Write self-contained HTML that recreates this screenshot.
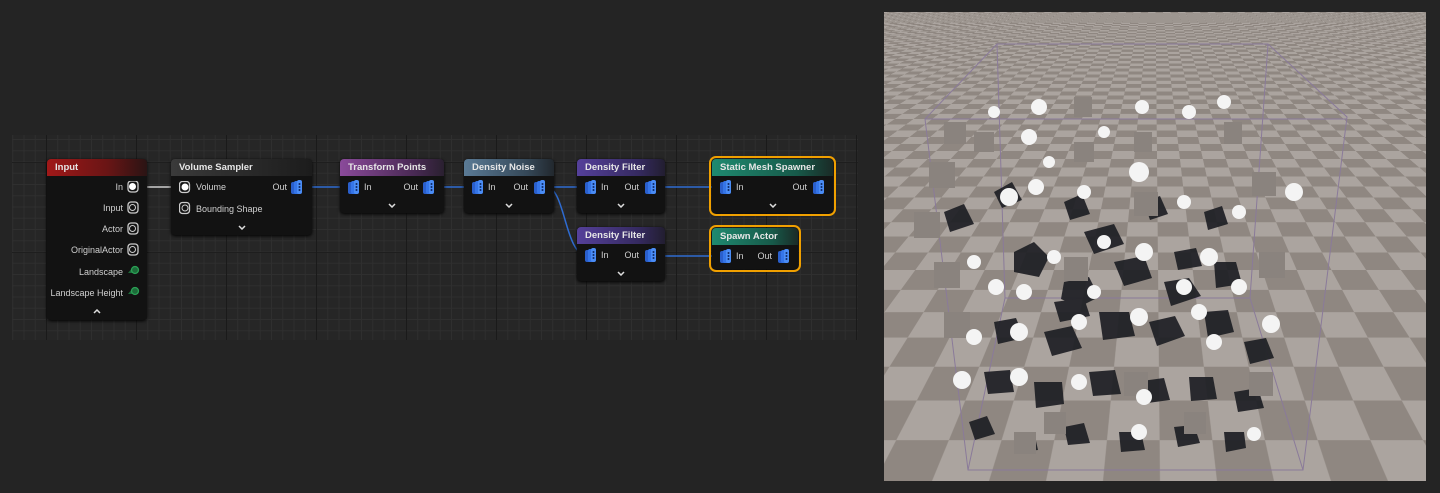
<!DOCTYPE html>
<html><head><meta charset="utf-8"><style>
*{margin:0;padding:0;box-sizing:border-box}
body{width:1440px;height:493px;background:#242424;position:relative;overflow:hidden;font-family:"Liberation Sans",sans-serif}
#graph{position:absolute;left:12px;top:135px;width:846px;height:205px;background-color:#262626;
background-image:linear-gradient(90deg,#1a1a1a 1px,transparent 1px),linear-gradient(0deg,#1e1e1e 1px,transparent 1px),linear-gradient(90deg,#2f2f2f 1px,transparent 1px),linear-gradient(0deg,#2f2f2f 1px,transparent 1px);
background-size:90px 90px,90px 90px,11.25px 11.25px,11.25px 11.25px;background-position:34px 0,0 28px,34px 0,0 5px}
.node{position:absolute;background:#121212;border-radius:4px;box-shadow:0 1px 3px #000;color:#d0d0d0;font-size:9px}
.hd{height:17px;border-radius:4px 4px 0 0;padding:3px 0 0 8px;font-weight:bold;color:#e6e6e6;font-size:9.5px}
.sel{outline:2px solid #f0a000;outline-offset:1px;border-radius:4px}
.row{position:absolute;height:14px;line-height:14px;white-space:nowrap}
.chev{position:absolute;left:50%;margin-left:-4px;width:8px;height:5px}
.pin{position:absolute;width:12px;height:14px}
</style></head><body>
<div id="graph"></div>
<svg style="position:absolute;left:0;top:0" width="880" height="493">
<path d="M140 187H176" stroke="#cfcfcf" stroke-width="1.5"/>
<path d="M304 187H352M436 187H476M546 187H590M656 187H722M546 187C566 187 564 256 588 256M656 256H722" stroke="#2e6bd0" stroke-width="1.5" fill="none"/>
</svg>
<svg width="0" height="0" style="position:absolute"><defs>
<g id="pn"><rect x="0" y="2" width="6" height="12" rx="2" fill="#2a5fcc"/><rect x="3" y="1" width="6" height="13" rx="2" fill="#3575e8"/><rect x="6" y="0" width="5" height="14" rx="2" fill="#4a8cf5"/><circle cx="8.5" cy="4" r="1" fill="#0d2a66"/><circle cx="8.5" cy="7" r="1" fill="#0d2a66"/><circle cx="8.5" cy="10" r="1" fill="#0d2a66"/></g>
<path id="cd" d="M1 1L4 4L7 1" stroke="#ddd" stroke-width="1.5" fill="none"/>
</defs></svg>

<div class="node" style="left:47px;top:159px;width:100px;height:161px">
<div class="hd" style="background:linear-gradient(90deg,#a01818,#6a1515 60%,#2a1414)">Input</div>
<div class="row" style="right:24px;top:21px">In</div>
<div class="row" style="right:24px;top:42px">Input</div>
<div class="row" style="right:24px;top:63px">Actor</div>
<div class="row" style="right:24px;top:84px">OriginalActor</div>
<div class="row" style="right:24px;top:106px">Landscape</div>
<div class="row" style="right:24px;top:127px">Landscape Height</div>
<svg style="position:absolute;left:80px;top:22px" width="14" height="120">
<rect x="1" y="0" width="10" height="11" rx="3" fill="none" stroke="#ccc" stroke-width="1.3"/><circle cx="5.5" cy="5.5" r="3.5" fill="#fff"/>
<rect x="1" y="21" width="10" height="11" rx="3" fill="none" stroke="#ccc" stroke-width="1.3"/><circle cx="5.5" cy="26.5" r="3" fill="none" stroke="#ccc"/>
<rect x="1" y="42" width="10" height="11" rx="3" fill="none" stroke="#ccc" stroke-width="1.3"/><circle cx="5.5" cy="47.5" r="3" fill="none" stroke="#ccc"/>
<rect x="1" y="63" width="10" height="11" rx="3" fill="none" stroke="#ccc" stroke-width="1.3"/><circle cx="5.5" cy="68.5" r="3" fill="none" stroke="#ccc"/>
<path d="M1 92L6 86H11V92Z" fill="#1d6b3a"/><circle cx="8" cy="89" r="3.5" fill="none" stroke="#2aa055" stroke-width="1.3"/>
<path d="M1 113L6 107H11V113Z" fill="#1d6b3a"/><circle cx="8" cy="110" r="3.5" fill="none" stroke="#2aa055" stroke-width="1.3"/>
</svg>
<svg class="chev" style="top:150px"><path d="M1 4L4 1L7 4" stroke="#ddd" stroke-width="1.5" fill="none"/></svg>
</div>

<div class="node" style="left:171px;top:159px;width:141px;height:76px">
<div class="hd" style="background:linear-gradient(90deg,#3a3a3a,#1c1c1c)">Volume Sampler</div>
<svg style="position:absolute;left:8px;top:22px" width="12" height="40">
<rect x="0.5" y="0.5" width="10" height="11" rx="3" fill="none" stroke="#ccc" stroke-width="1.3"/><circle cx="6" cy="6" r="3.5" fill="#fff"/>
<rect x="0.5" y="21.5" width="10" height="11" rx="3" fill="none" stroke="#ccc" stroke-width="1.3"/><circle cx="6" cy="27" r="3" fill="none" stroke="#ccc"/>
</svg>
<div class="row" style="left:25px;top:21px">Volume</div>
<div class="row" style="left:25px;top:43px">Bounding Shape</div>
<div class="row" style="right:25px;top:21px">Out</div>
<svg class="pin" style="left:120px;top:21px"><use href="#pn"/></svg>
<svg class="chev" style="top:66px"><use href="#cd"/></svg>
</div>

<div class="node" style="left:340px;top:159px;width:104px;height:54px">
<div class="hd" style="background:linear-gradient(90deg,#8a4a9a,#4a2a55 70%,#2a2030)">Transform Points</div>
<svg class="pin" style="left:8px;top:21px"><use href="#pn"/></svg><div class="row" style="left:24px;top:21px">In</div>
<div class="row" style="right:26px;top:21px">Out</div><svg class="pin" style="left:83px;top:21px"><use href="#pn"/></svg>
<svg class="chev" style="top:44px"><use href="#cd"/></svg></div>

<div class="node" style="left:464px;top:159px;width:90px;height:54px">
<div class="hd" style="background:linear-gradient(90deg,#5a7a95,#354858 70%,#22282e)">Density Noise</div>
<svg class="pin" style="left:8px;top:21px"><use href="#pn"/></svg><div class="row" style="left:24px;top:21px">In</div>
<div class="row" style="right:26px;top:21px">Out</div><svg class="pin" style="left:70px;top:21px"><use href="#pn"/></svg>
<svg class="chev" style="top:44px"><use href="#cd"/></svg></div>

<div class="node" style="left:577px;top:159px;width:88px;height:54px">
<div class="hd" style="background:linear-gradient(90deg,#55409a,#352a60 70%,#221e30)">Density Filter</div>
<svg class="pin" style="left:8px;top:21px"><use href="#pn"/></svg><div class="row" style="left:24px;top:21px">In</div>
<div class="row" style="right:26px;top:21px">Out</div><svg class="pin" style="left:68px;top:21px"><use href="#pn"/></svg>
<svg class="chev" style="top:44px"><use href="#cd"/></svg></div>

<div class="node" style="left:577px;top:227px;width:88px;height:54px">
<div class="hd" style="background:linear-gradient(90deg,#55409a,#352a60 70%,#221e30)">Density Filter</div>
<svg class="pin" style="left:8px;top:21px"><use href="#pn"/></svg><div class="row" style="left:24px;top:21px">In</div>
<div class="row" style="right:26px;top:21px">Out</div><svg class="pin" style="left:68px;top:21px"><use href="#pn"/></svg>
<svg class="chev" style="top:44px"><use href="#cd"/></svg></div>

<div class="node sel" style="left:712px;top:159px;width:121px;height:54px">
<div class="hd" style="background:linear-gradient(90deg,#1f8a70,#175a4a 70%,#1a2a26)">Static Mesh Spawner</div>
<svg class="pin" style="left:8px;top:21px"><use href="#pn"/></svg><div class="row" style="left:24px;top:21px">In</div>
<div class="row" style="right:26px;top:21px">Out</div><svg class="pin" style="left:101px;top:21px"><use href="#pn"/></svg>
<svg class="chev" style="top:44px"><use href="#cd"/></svg></div>

<div class="node sel" style="left:712px;top:228px;width:86px;height:41px">
<div class="hd" style="background:linear-gradient(90deg,#1f8a70,#175a4a 70%,#1a2a26)">Spawn Actor</div>
<svg class="pin" style="left:8px;top:21px"><use href="#pn"/></svg><div class="row" style="left:24px;top:21px">In</div>
<div class="row" style="right:26px;top:21px">Out</div><svg class="pin" style="left:66px;top:21px"><use href="#pn"/></svg>
</div>

<div style="position:absolute;left:884px;top:12px;width:542px;height:469px;overflow:hidden;background:#9a938e;perspective:600px;perspective-origin:50% 36px">
<div style="position:absolute;left:-3729px;width:8000px;top:-19531px;height:20000px;transform-origin:50% 100%;transform:rotateX(80deg);
background:repeating-conic-gradient(#8f8781 0 25%,#aba49f 0 50%) 15px 0/114px 114px"></div>
<svg style="position:absolute;left:0;top:0" width="542" height="469">
<g stroke="#8a7a9a" stroke-width="1" fill="none">
<path d="M113 32L41 107L84 458H419L463 105L384 32ZM41 107H463M113 32L121 286H366L384 32M84 458L121 286M419 458L366 286"/>
</g>
<g fill="#1e1f24" opacity=".92">
<path d="M130 240l20-10 15 15-10 20-25-5z"/><path d="M180 270l25-5 10 20-20 10-18-8z"/><path d="M230 250l30-6 8 22-28 8z"/><path d="M280 270l25-4 12 18-30 10z"/><path d="M330 250l22 0 6 22-26 4z"/><path d="M110 310l22-4 8 20-26 6z"/><path d="M160 320l28-6 10 22-30 8z"/><path d="M215 300l30 0 6 24-32 4z"/><path d="M265 310l26-6 10 20-28 10z"/><path d="M320 300l24-2 6 22-26 6z"/><path d="M360 330l22-4 8 20-24 6z"/><path d="M100 360l26-2 4 22-26 2z"/><path d="M150 370l28 0 2 22-28 4z"/><path d="M205 360l26-2 6 24-28 2z"/><path d="M250 370l30-4 6 22-30 4z"/><path d="M305 365l24 0 4 22-26 2z"/><path d="M350 380l24-4 6 20-26 4z"/><path d="M85 410l18-6 8 18-20 6z"/><path d="M130 420l20 0 4 18-22 2z"/><path d="M180 415l20-4 6 20-22 2z"/><path d="M235 420l22 0 4 18-24 2z"/><path d="M290 415l20-2 6 18-22 4z"/><path d="M340 420l20 0 2 16-20 4z"/><path d="M60 200l20-8 10 20-24 8z"/><path d="M110 180l18-10 10 18-20 8z"/><path d="M180 190l18-8 8 20-20 6z"/><path d="M260 190l16-6 8 18-18 6z"/><path d="M320 200l18-6 6 18-20 6z"/><path d="M200 220l30-8 10 20-30 10z"/><path d="M170 290l30-4 6 18-30 6z"/><path d="M290 240l22-4 6 18-24 4z"/>
</g>
<g fill="#8a837e">
<rect x="60" y="110" width="22" height="22"/><rect x="45" y="150" width="26" height="26"/><rect x="30" y="200" width="26" height="26"/><rect x="50" y="250" width="26" height="26"/><rect x="90" y="120" width="20" height="20"/><rect x="190" y="85" width="18" height="20"/><rect x="190" y="130" width="20" height="20"/><rect x="250" y="120" width="18" height="20"/><rect x="250" y="180" width="24" height="24"/><rect x="368" y="160" width="24" height="24"/><rect x="375" y="240" width="26" height="26"/><rect x="365" y="360" width="24" height="24"/><rect x="60" y="300" width="26" height="26"/><rect x="180" y="245" width="24" height="24"/><rect x="160" y="400" width="22" height="22"/><rect x="300" y="400" width="22" height="22"/><rect x="130" y="420" width="22" height="22"/><rect x="240" y="360" width="24" height="24"/><rect x="340" y="110" width="18" height="22"/>
</g>
<g fill="#f4f4f4">
<circle cx="155" cy="95" r="8"/><circle cx="145" cy="125" r="8"/><circle cx="152" cy="175" r="8"/><circle cx="125" cy="185" r="9"/><circle cx="255" cy="160" r="10"/><circle cx="258" cy="95" r="7"/><circle cx="340" cy="90" r="7"/><circle cx="305" cy="100" r="7"/><circle cx="110" cy="100" r="6"/><circle cx="410" cy="180" r="9"/><circle cx="200" cy="180" r="7"/><circle cx="325" cy="245" r="9"/><circle cx="355" cy="275" r="8"/><circle cx="112" cy="275" r="8"/><circle cx="140" cy="280" r="8"/><circle cx="195" cy="310" r="8"/><circle cx="255" cy="305" r="9"/><circle cx="315" cy="300" r="8"/><circle cx="387" cy="312" r="9"/><circle cx="90" cy="325" r="8"/><circle cx="135" cy="320" r="9"/><circle cx="78" cy="368" r="9"/><circle cx="135" cy="365" r="9"/><circle cx="195" cy="370" r="8"/><circle cx="260" cy="385" r="8"/><circle cx="330" cy="330" r="8"/><circle cx="370" cy="422" r="7"/><circle cx="255" cy="420" r="8"/><circle cx="170" cy="245" r="7"/><circle cx="220" cy="230" r="7"/><circle cx="260" cy="240" r="9"/><circle cx="300" cy="190" r="7"/><circle cx="355" cy="200" r="7"/><circle cx="165" cy="150" r="6"/><circle cx="220" cy="120" r="6"/><circle cx="90" cy="250" r="7"/><circle cx="210" cy="280" r="7"/><circle cx="300" cy="275" r="8"/>
</g>
</svg>
</div>
</body></html>
